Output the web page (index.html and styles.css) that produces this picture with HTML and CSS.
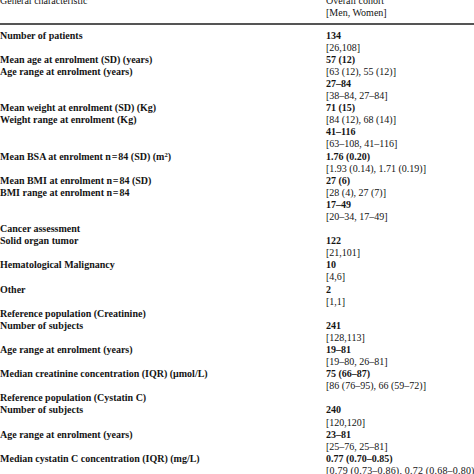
FILE: index.html
```html
<!DOCTYPE html>
<html>
<head>
<meta charset="utf-8">
<link rel="stylesheet" href="styles.css">
</head>
<body>
<div class="sheet">
  <div class="head">
    <div class="line"><span class="lab">General characteristic</span><span class="val">Overall cohort</span></div>
    <div class="line"><span class="lab"></span><span class="val">[Men, Women]</span></div>
  </div>
  <div class="body">
    <div class="line"><span class="lab">Number of patients</span><span class="val b">134</span></div>
    <div class="line"><span class="lab"></span><span class="val">[26,108]</span></div>
    <div class="line"><span class="lab">Mean age at enrolment (SD) (years)</span><span class="val b">57 (12)</span></div>
    <div class="line"><span class="lab">Age range at enrolment (years)</span><span class="val">[63 (12), 55 (12)]</span></div>
    <div class="line"><span class="lab"></span><span class="val b">27–84</span></div>
    <div class="line"><span class="lab"></span><span class="val">[38–84, 27–84]</span></div>
    <div class="line"><span class="lab">Mean weight at enrolment (SD) (Kg)</span><span class="val b">71 (15)</span></div>
    <div class="line"><span class="lab">Weight range at enrolment (Kg)</span><span class="val">[84 (12), 68 (14)]</span></div>
    <div class="line"><span class="lab"></span><span class="val b">41–116</span></div>
    <div class="line"><span class="lab"></span><span class="val">[63–108, 41–116]</span></div>
    <div class="line"><span class="lab">Mean BSA at enrolment n&#8202;=&#8202;84 (SD) (m<sup>2</sup>)</span><span class="val b">1.76 (0.20)</span></div>
    <div class="line"><span class="lab"></span><span class="val">[1.93 (0.14), 1.71 (0.19)]</span></div>
    <div class="line"><span class="lab">Mean BMI at enrolment n&#8202;=&#8202;84 (SD)</span><span class="val b">27 (6)</span></div>
    <div class="line"><span class="lab">BMI range at enrolment n&#8202;=&#8202;84</span><span class="val">[28 (4), 27 (7)]</span></div>
    <div class="line"><span class="lab"></span><span class="val b">17–49</span></div>
    <div class="line"><span class="lab"></span><span class="val">[20–34, 17–49]</span></div>
    <div class="line"><span class="lab">Cancer assessment</span><span class="val"></span></div>
    <div class="line"><span class="lab">Solid organ tumor</span><span class="val b">122</span></div>
    <div class="line"><span class="lab"></span><span class="val">[21,101]</span></div>
    <div class="line"><span class="lab">Hematological Malignancy</span><span class="val b">10</span></div>
    <div class="line"><span class="lab"></span><span class="val">[4,6]</span></div>
    <div class="line"><span class="lab">Other</span><span class="val b">2</span></div>
    <div class="line"><span class="lab"></span><span class="val">[1,1]</span></div>
    <div class="line"><span class="lab">Reference population (Creatinine)</span><span class="val"></span></div>
    <div class="line"><span class="lab">Number of subjects</span><span class="val b">241</span></div>
    <div class="line"><span class="lab"></span><span class="val">[128,113]</span></div>
    <div class="line"><span class="lab">Age range at enrolment (years)</span><span class="val b">19–81</span></div>
    <div class="line"><span class="lab"></span><span class="val">[19–80, 26–81]</span></div>
    <div class="line"><span class="lab">Median creatinine concentration (IQR) (μmol/L)</span><span class="val b">75 (66–87)</span></div>
    <div class="line"><span class="lab"></span><span class="val">[86 (76–95), 66 (59–72)]</span></div>
    <div class="line"><span class="lab">Reference population (Cystatin C)</span><span class="val"></span></div>
    <div class="line"><span class="lab">Number of subjects</span><span class="val b">240</span></div>
    <div class="line"><span class="lab"></span><span class="val">[120,120]</span></div>
    <div class="line"><span class="lab">Age range at enrolment (years)</span><span class="val b">23–81</span></div>
    <div class="line"><span class="lab"></span><span class="val">[25–76, 25–81]</span></div>
    <div class="line"><span class="lab">Median cystatin C concentration (IQR) (mg/L)</span><span class="val b">0.77 (0.70–0.85)</span></div>
    <div class="line"><span class="lab"></span><span class="val wide">[0.79 (0.73–0.86), 0.72 (0.68–0.80)]</span></div>
  </div>
</div>
</body>
</html>
```
FILE: styles.css
```css
html, body {
  margin: 0;
  padding: 0;
  background: #fff;
  overflow: hidden;
}
.sheet {
  width: 474px;
  font-family: "Liberation Serif", "Times New Roman", serif;
  font-size: 10px;
  color: #141414;
}
.line {
  display: grid;
  grid-template-columns: 326px 1fr;
  height: 12.1px;
  line-height: 12.1px;
  white-space: nowrap;
}
.head {
  margin-top: -5.4px;
  padding-bottom: 4.2px;
  border-bottom: 2px solid #555;
}
.body {
  margin-top: 4.6px;
}
.body .lab {
  font-weight: bold;
}
.val.b {
  font-weight: bold;
}
.val.wide {
  letter-spacing: 0.2px;
}
sup {
  font-size: 6.5px;
  line-height: 0;
  vertical-align: 3.5px;
}
```
